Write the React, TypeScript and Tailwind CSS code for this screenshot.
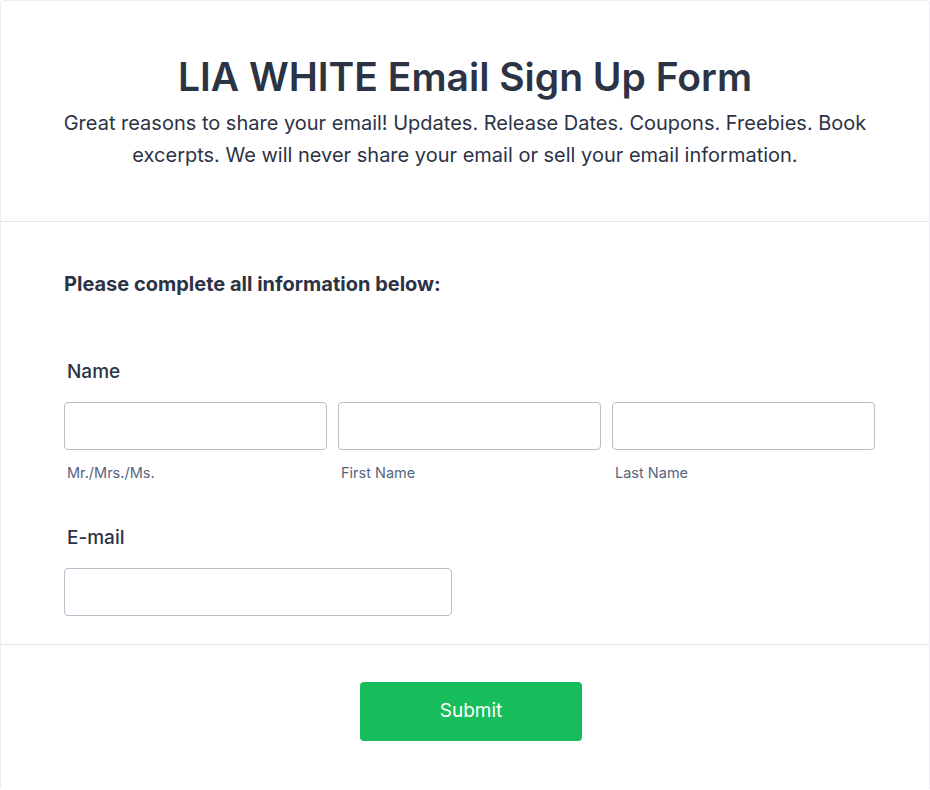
export default function App() {
  return (
    <div className="w-[930px] h-[790px] bg-white font-['Inter',sans-serif] text-[#2c3345]">
      <div className="w-full border-t border-r border-l border-[#eceef3] rounded-t-[4px]">
        <div className="flex flex-col items-center px-[60px] pt-[52px] pb-[50px] border-b border-[#e3e5ea]">
          <h1 className="text-[39px] leading-[48px] font-semibold">LIA WHITE Email Sign Up Form</h1>
          <p className="mt-[6px] text-[20px] leading-[32px] text-center">
            Great reasons to share your email! Updates. Release Dates. Coupons. Freebies. Book excerpts. We will never share your email or sell your email information.
          </p>
        </div>

        <div className="px-[63px] pt-[48px] pb-[28px] border-b border-[#e3e5ea]">
          <p className="text-[20px] leading-[28px] font-bold">Please complete all information below:</p>

          <div className="mt-[60px]">
            <label className="block pl-[3px] text-[19px] leading-[28px] font-medium">Name</label>
            <div className="mt-[16px] grid grid-cols-3 gap-[11px] w-[811px]">
              {["Mr./Mrs./Ms.", "First Name", "Last Name"].map((s) => (
                <div key={s} className="flex flex-col">
                  <input className="h-[48px] rounded-[4px] border border-[#b8bdc9] bg-white px-3 outline-none" />
                  <span className="mt-[14px] pl-[3px] text-[14.5px] leading-[18px] text-[#57647e]">{s}</span>
                </div>
              ))}
            </div>
          </div>

          <div className="mt-[42px]">
            <label className="block pl-[3px] text-[19px] leading-[28px] font-medium">E-mail</label>
            <input className="mt-[16px] block w-[388px] h-[48px] rounded-[4px] border border-[#b8bdc9] bg-white px-3 outline-none" />
          </div>
        </div>

        <div className="flex justify-center pl-[12px] pt-[37px] pb-[48px]">
          <button className="w-[222px] h-[59px] rounded-[4px] bg-[#18bd5b] text-white text-[19px] font-normal">Submit</button>
        </div>
      </div>
    </div>
  );
}
